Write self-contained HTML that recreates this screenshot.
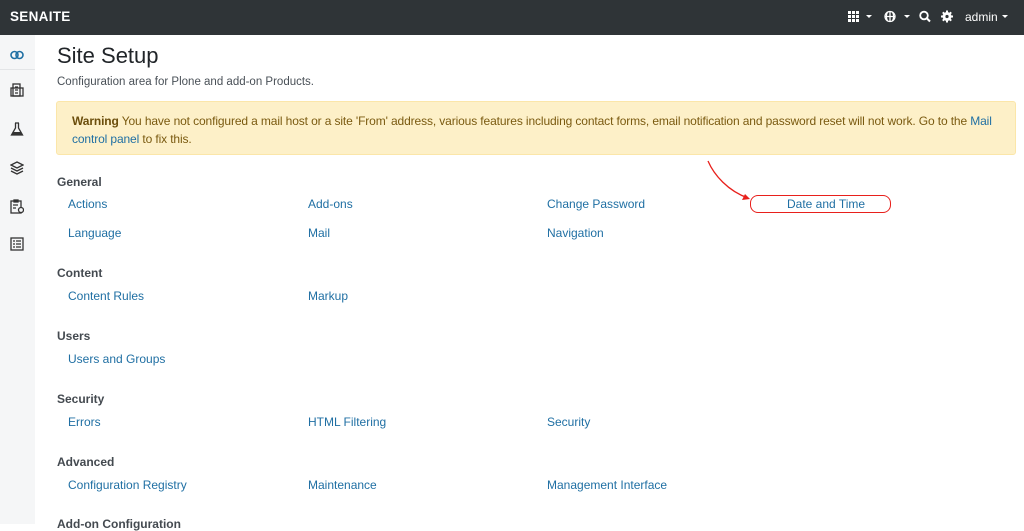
<!DOCTYPE html>
<html><head><meta charset="utf-8"><style>
*{margin:0;padding:0;box-sizing:border-box}
body{width:1024px;height:524px;overflow:hidden;background:#fff;font-family:"Liberation Sans",sans-serif;color:#212529;position:relative}
.top{position:absolute;left:0;top:0;width:1024px;height:35px;background:#2f3437}
.logo{position:absolute;left:10px;top:9px;color:#fff;font-weight:bold;font-size:13.5px;letter-spacing:.3px}
.side{position:absolute;left:0;top:35px;width:35px;height:489px;background:#f5f6f7}
.side svg{position:absolute;left:10px}
.a{position:absolute;font-size:12px;color:#1f6fa3;white-space:nowrap}
.h{position:absolute;left:57px;font-size:12px;font-weight:bold;color:#444a50}
</style></head><body>
<div class="top"><div class="logo">SENAITE</div>
<svg style="position:absolute;left:848px;top:10px" width="170" height="14">
<g fill="#fff"><rect x="0" y="1" width="3" height="3"/><rect x="4" y="1" width="3" height="3"/><rect x="8" y="1" width="3" height="3"/><rect x="0" y="5" width="3" height="3"/><rect x="4" y="5" width="3" height="3"/><rect x="8" y="5" width="3" height="3"/><rect x="0" y="9" width="3" height="3"/><rect x="4" y="9" width="3" height="3"/><rect x="8" y="9" width="3" height="3"/>
<path d="M18 5h6l-3 3z"/><path d="M56 5h6l-3 3z"/><path d="M154 5h6l-3 3z"/></g>
<g fill="none" stroke="#fff" stroke-width="1.3"><circle cx="42" cy="6.5" r="5"/><path d="M37 6.5h10M42 1.5v10M39.5 2c-1.5 3-1.5 6 0 9M44.5 2c1.5 3 1.5 6 0 9"/>
<circle cx="76" cy="5.5" r="3.8" stroke-width="1.8"/><path d="M79 8.5l3 3" stroke-width="2"/></g>
<circle cx="99" cy="6.5" r="4.5" fill="#fff"/>
<g stroke="#fff" stroke-width="2"><path d="M99 0.5v12M93 6.5h12M94.8 2.3l8.4 8.4M103.2 2.3l-8.4 8.4"/></g>
<circle cx="99" cy="6.5" r="1.6" fill="#2f3437"/>
<text x="117" y="11" fill="#fff" font-size="12" font-family="Liberation Sans">admin</text></svg>
</div>
<div class="side">
<div style="position:absolute;left:0;top:34px;width:35px;height:1px;background:#e3e5e7"></div>
<svg style="top:15px" width="14" height="10"><g fill="none" stroke="#1f6fa3" stroke-width="1.6"><circle cx="4.5" cy="5" r="3.5"/><circle cx="9.5" cy="5" r="3.5"/></g></svg>
<svg style="top:48px" width="14" height="14"><g fill="none" stroke="#333" stroke-width="1.3"><rect x="3" y="1" width="7" height="12"/><rect x="1" y="5" width="12" height="8"/><path d="M5 4h3M5 7h3M5 10h3"/></g></svg>
<svg style="top:87px" width="14" height="14"><path d="M5 1h4M5.5 1v5l-4 7h11l-4-7v-5" fill="none" stroke="#333" stroke-width="1.3"/><path d="M3 10h8l1.5 3h-11z" fill="#333"/></svg>
<svg style="top:126px" width="14" height="14"><g fill="none" stroke="#333" stroke-width="1.3"><path d="M7 1l6 3-6 3-6-3z"/><path d="M1 7l6 3 6-3M1 10l6 3 6-3"/></g></svg>
<svg style="top:164px" width="14" height="15"><g fill="none" stroke="#333" stroke-width="1.3"><rect x="1" y="2" width="10" height="12"/><rect x="4" y="1" width="4" height="2"/><path d="M3 6h5M3 9h3"/><circle cx="11" cy="11" r="2.5" fill="#f5f6f7"/></g></svg>
<svg style="top:202px" width="14" height="14"><g fill="none" stroke="#333" stroke-width="1.3"><rect x="1" y="1" width="12" height="12"/><path d="M3 4h2M3 7h2M3 10h2M6 4h5M6 7h5M6 10h5"/></g></svg>
</div>
<div style="position:absolute;left:57px;top:43px;font-size:22px;color:#212529">Site Setup</div>
<div style="position:absolute;left:57px;top:76px;font-size:11.5px;color:#495057">Configuration area for Plone and add-on Products.</div>
<div style="position:absolute;left:56px;top:101px;width:960px;height:54px;background:#fdf0c8;border:1px solid #fbe6a9;border-radius:3px;padding:10px 15px;font-size:12px;letter-spacing:-0.12px;line-height:18px;color:#7a5a10"><b style="color:#6b4e0c">Warning</b> You have not configured a mail host or a site 'From' address, various features including contact forms, email notification and password reset will not work. Go to the <span style="color:#1f6fa3">Mail control panel</span> to fix this.</div>
<div class="h" style="top:175px">General</div>
<div class="a" style="left:68px;top:197px">Actions</div><div class="a" style="left:308px;top:197px">Add-ons</div><div class="a" style="left:547px;top:197px">Change Password</div><div class="a" style="left:787px;top:197px">Date and Time</div>
<div class="a" style="left:68px;top:226px">Language</div><div class="a" style="left:308px;top:226px">Mail</div><div class="a" style="left:547px;top:226px">Navigation</div>
<div class="h" style="top:266px">Content</div>
<div class="a" style="left:68px;top:289px">Content Rules</div><div class="a" style="left:308px;top:289px">Markup</div>
<div class="h" style="top:329px">Users</div>
<div class="a" style="left:68px;top:352px">Users and Groups</div>
<div class="h" style="top:392px">Security</div>
<div class="a" style="left:68px;top:415px">Errors</div><div class="a" style="left:308px;top:415px">HTML Filtering</div><div class="a" style="left:547px;top:415px">Security</div>
<div class="h" style="top:455px">Advanced</div>
<div class="a" style="left:68px;top:478px">Configuration Registry</div><div class="a" style="left:308px;top:478px">Maintenance</div><div class="a" style="left:547px;top:478px">Management Interface</div>
<div class="h" style="top:517px">Add-on Configuration</div>
<div style="position:absolute;left:750px;top:195px;width:141px;height:18px;border:1.5px solid #e8201c;border-radius:8px"></div>
<svg style="position:absolute;left:700px;top:155px" width="60" height="50"><path d="M8 6 C14 20 28 36 48 43" fill="none" stroke="#e8201c" stroke-width="1.3"/><path d="M50 44l-8 1 3-6z" fill="#e8201c"/></svg>
</body></html>
